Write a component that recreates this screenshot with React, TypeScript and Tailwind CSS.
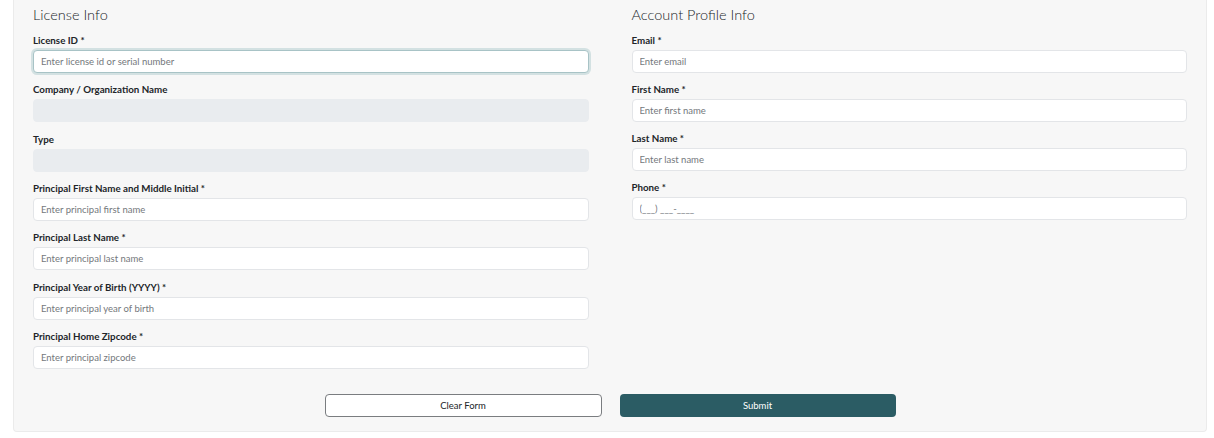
import React from 'react';

type FieldProps = {
  label: string;
  placeholder?: string;
  disabled?: boolean;
  focused?: boolean;
  tight?: boolean;
};

const Field = ({ label, placeholder, disabled, focused, tight }: FieldProps) => {
  let inputClass =
    'block w-full h-[23px] rounded-[4px] px-[7px] text-[9.5px] text-[#212529] placeholder:text-[#74787c] outline-none border ';
  if (disabled) {
    inputClass += 'bg-[#e9ecef] border-[#e9ecef]';
  } else if (focused) {
    inputClass += 'bg-white border-[#a8c3c6] shadow-[0_0_0_2px_#d3e1e2]';
  } else {
    inputClass += 'bg-white border-[#e3e5e8]';
  }

  return (
    <div className={tight ? 'mb-[10px]' : 'mb-[10.33px]'}>
      <label className="block text-[9.75px] leading-[12px] font-bold text-[#212529] mb-[4px]">
        {label}
      </label>
      <input
        type="text"
        className={inputClass}
        placeholder={placeholder}
        disabled={disabled}
        readOnly={!disabled}
      />
    </div>
  );
};

const App = () => {
  return (
    <div className="bg-white min-h-screen pl-[13px] pr-[7px] font-['Lato','Noto_Sans',sans-serif]">
      <div className="bg-[#f7f7f7] border border-t-0 border-[#ebebeb] rounded-b-[4px] px-[19px] pt-[5px] pb-[14px]">
        <div className="grid grid-cols-2 gap-x-[43px]">
          <div>
            <h2 className="text-[14.5px] leading-[20px] font-light text-[#212529] mb-[9px]">License Info</h2>
            <Field label="License ID *" placeholder="Enter license id or serial number" focused />
            <Field label="Company / Organization Name" disabled />
            <Field label="Type" disabled />
            <Field label="Principal First Name and Middle Initial *" placeholder="Enter principal first name" />
            <Field label="Principal Last Name *" placeholder="Enter principal last name" />
            <Field label="Principal Year of Birth (YYYY) *" placeholder="Enter principal year of birth" />
            <Field label="Principal Home Zipcode *" placeholder="Enter principal zipcode" />
          </div>
          <div>
            <h2 className="text-[14.5px] leading-[20px] font-light text-[#212529] mb-[9px]">Account Profile Info</h2>
            <Field label="Email *" placeholder="Enter email" tight />
            <Field label="First Name *" placeholder="Enter first name" tight />
            <Field label="Last Name *" placeholder="Enter last name" tight />
            <Field label="Phone *" placeholder="(___) ___-____" tight />
          </div>
        </div>
        <div className="flex justify-center gap-[18px] mt-[15px]">
          <button
            type="button"
            className="w-[277px] h-[23px] rounded-[4px] border border-[#7a7d80] bg-white text-[9.5px] text-[#212529]"
          >
            Clear Form
          </button>
          <button
            type="button"
            className="w-[276px] h-[23px] rounded-[4px] bg-[#2b5c64] text-[9.5px] text-white"
          >
            Submit
          </button>
        </div>
      </div>
    </div>
  );
};

export default App;
